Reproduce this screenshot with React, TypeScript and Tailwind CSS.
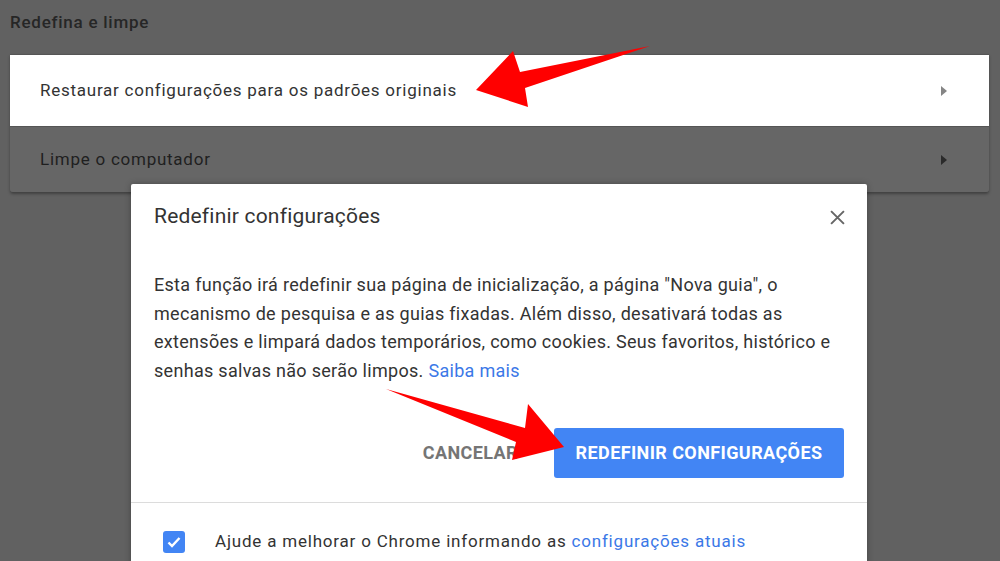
import React from "react";

export default function App() {
  return (
    <div
      className="relative w-[1000px] h-[561px] overflow-hidden bg-[#616161]"
      style={{ fontFamily: "Roboto, 'Liberation Sans', sans-serif" }}
    >
      <div className="px-[10px]">
        <div className="h-[54px] pt-[10px] text-[17px] font-medium tracking-[0.75px] text-[#262626] leading-[24px]">
          Redefina e limpe
        </div>
        <div className="w-[979px] rounded-b-[3px] shadow-[0_2px_3px_rgba(0,0,0,0.35)]">
          <div className="flex items-center justify-between h-[72px] bg-white border-t border-[#555] pl-[30px] pr-[42px]">
            <span className="text-[17px] tracking-[0.75px] text-[#333]">Restaurar configurações para os padrões originais</span>
            <svg width="6" height="10" viewBox="0 0 6 10"><path d="M0 0 L6 5 L0 10 Z" fill="#858585" /></svg>
          </div>
          <div className="flex items-center justify-between h-[66px] bg-[#666666] border-t border-[#555] pl-[30px] pr-[42px] rounded-b-[3px]">
            <span className="text-[17px] tracking-[0.75px] text-[#1f1f1f]">Limpe o computador</span>
            <svg width="6" height="10" viewBox="0 0 6 10"><path d="M0 0 L6 5 L0 10 Z" fill="#2a2a2a" /></svg>
          </div>
        </div>
      </div>

      <div className="absolute left-[131px] top-[184px] w-[736px] h-[400px] bg-white rounded-[2px] shadow-[0_0_6px_rgba(0,0,0,0.3)]">
        <div className="flex items-center justify-between h-[66px] pl-[23px] pr-[22px]">
          <span className="text-[21px] tracking-[0.2px] text-[#333]">Redefinir configurações</span>
          <svg width="15" height="15" viewBox="0 0 14 14">
            <path d="M1 1 L13 13 M13 1 L1 13" stroke="#666" strokeWidth="1.8" />
          </svg>
        </div>
        <div className="pl-[23px] pr-[20px] pt-[21px] text-[18px] tracking-[0.3px] leading-[28.7px] text-[#333] whitespace-nowrap">
          <div>Esta função irá redefinir sua página de inicialização, a página "Nova guia", o</div>
          <div>mecanismo de pesquisa e as guias fixadas. Além disso, desativará todas as</div>
          <div>extensões e limpará dados temporários, como cookies. Seus favoritos, histórico e</div>
          <div>
            senhas salvas não serão limpos. <span className="text-[#3b78e7]">Saiba mais</span>
          </div>
        </div>
        <div className="flex items-center justify-end gap-[36px] pr-[23px] mt-[42px]">
          <span className="text-[18px] font-bold tracking-[0.4px] text-[#757575]">CANCELAR</span>
          <div className="flex items-center justify-center w-[290px] h-[50px] bg-[#4285f4] rounded-[3px] text-white text-[18px] font-bold tracking-[0.4px]">
            REDEFINIR CONFIGURAÇÕES
          </div>
        </div>
        <div className="mt-[24px] border-t border-[#dcdcdc]" />
        <div className="flex items-center h-[78px] pl-[32px] gap-[30px]">
          <div className="w-[22px] h-[22px] rounded-[3px] bg-[#4285f4] flex items-center justify-center">
            <svg width="14" height="12" viewBox="0 0 14 12">
              <path d="M1.5 6.5 L5 10 L12.5 2" stroke="white" strokeWidth="2.4" fill="none" />
            </svg>
          </div>
          <span className="text-[17px] tracking-[0.8px] text-[#333]">
            Ajude a melhorar o Chrome informando as <span className="text-[#3b78e7]">configurações atuais</span>
          </span>
        </div>
      </div>

      <svg className="absolute left-0 top-0 pointer-events-none" width="1000" height="561">
        <polygon points="476,90 513,51 520,72 650,46 525,88 528,107" fill="#ff0000" />
        <polygon points="386,389 525,428 528,404 564,447 512,460 516,442" fill="#ff0000" />
      </svg>
    </div>
  );
}
